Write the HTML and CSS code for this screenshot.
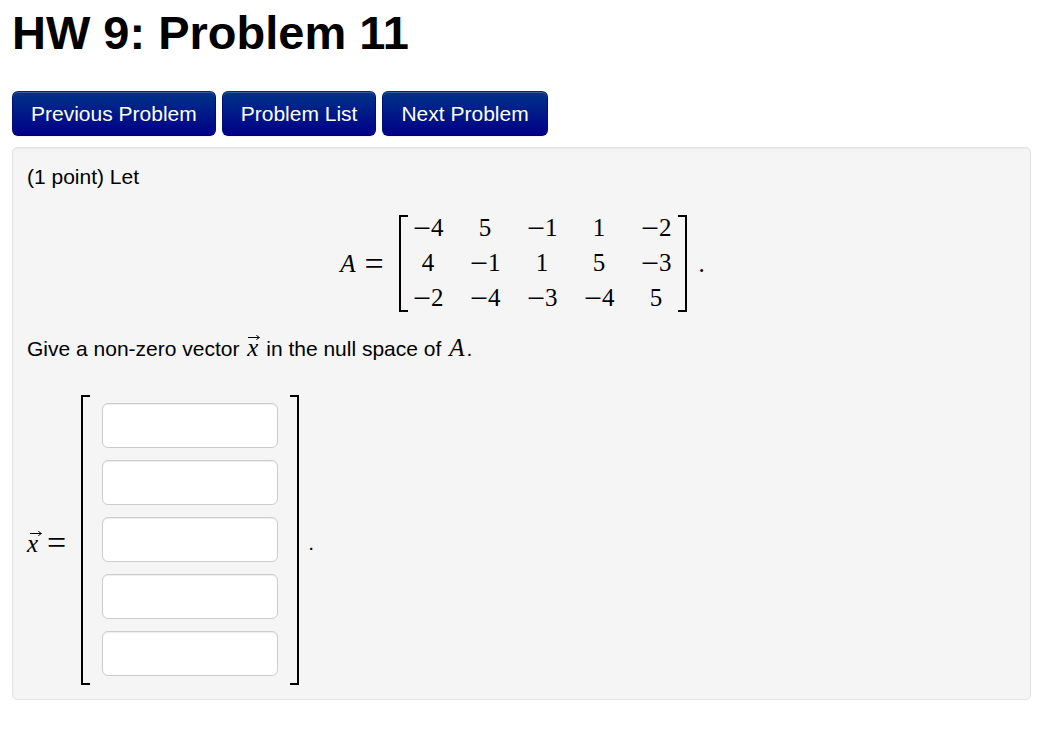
FILE: index.html
```html
<!DOCTYPE html>
<html lang="en">
<head>
<meta charset="utf-8">
<title>HW 9: Problem 11</title>
<link rel="stylesheet" href="styles.css">
</head>
<body>
<main class="page">
  <h1 class="title">HW 9: Problem 11</h1>
  <nav class="nav">
    <a class="btn" href="#previous">Previous Problem</a>
    <a class="btn" href="#list">Problem List</a>
    <a class="btn" href="#next">Next Problem</a>
  </nav>
  <form class="problem">
    <p class="text">(1 point) Let</p>
    <div class="equation centered">
      <span class="math symbol"><i>A</i></span>
      <span class="math equals">=</span>
      <div class="matrix">
        <span class="bracket left"></span>
        <table class="entries">
          <tr><td><span class="minus">−</span>4</td><td>5</td><td><span class="minus">−</span>1</td><td>1</td><td><span class="minus">−</span>2</td></tr>
          <tr><td>4</td><td><span class="minus">−</span>1</td><td>1</td><td>5</td><td><span class="minus">−</span>3</td></tr>
          <tr><td><span class="minus">−</span>2</td><td><span class="minus">−</span>4</td><td><span class="minus">−</span>3</td><td><span class="minus">−</span>4</td><td>5</td></tr>
        </table>
        <span class="bracket right"></span>
      </div>
      <span class="math stop">.</span>
    </div>
    <p class="text">Give a non-zero vector <span class="math vector"><i>x</i><svg class="arrow" viewBox="0 0 12 6" aria-hidden="true"><path d="M0 3.500H11M8.500 1Q9.500 3 11.500 3.500Q9.500 4 8.500 6"/></svg></span> in the null space of <span class="math symbol"><i>A</i></span>.</p>
    <div class="equation answer">
      <span class="math vector"><i>x</i><svg class="arrow" viewBox="0 0 12 6" aria-hidden="true"><path d="M0 3.500H11M8.500 1Q9.500 3 11.500 3.500Q9.500 4 8.500 6"/></svg></span>
      <span class="math equals">=</span>
      <div class="matrix">
        <span class="bracket left"></span>
        <div class="fields">
          <input class="field" type="text" aria-label="Entry 1 of x">
          <input class="field" type="text" aria-label="Entry 2 of x">
          <input class="field" type="text" aria-label="Entry 3 of x">
          <input class="field" type="text" aria-label="Entry 4 of x">
          <input class="field" type="text" aria-label="Entry 5 of x">
        </div>
        <span class="bracket right"></span>
      </div>
      <span class="stop">.</span>
    </div>
  </form>
</main>
</body>
</html>
```
FILE: styles.css
```css
* { box-sizing: border-box; }

body {
  margin: 0;
  background: #fff;
  color: #000;
  font: 21px/30px "Liberation Sans", Arial, sans-serif;
}

.page { padding: 4px 28px 28px 12px; }

.title {
  margin: 0 0 29px;
  font-size: 47px;
  line-height: 58px;
}

.nav {
  display: flex;
  flex-wrap: wrap;
  gap: 6px;
  margin-bottom: 11px;
}

.btn {
  padding: 7px 18px 6px;
  border: 1px solid #002b73;
  border-color: #002a70 #00106f #000070;
  border-radius: 6px;
  background: linear-gradient(#003388, #000088);
  box-shadow: inset 0 1px 0 rgba(255, 255, 255, .2), 0 1px 2px rgba(0, 0, 0, .05);
  color: #fff;
  text-decoration: none;
}

.problem {
  padding: 14px;
  border: 1px solid #e3e3e3;
  border-radius: 5px;
  background: #f5f5f5;
  box-shadow: inset 0 1px 1px rgba(0, 0, 0, .05);
}

.text { margin: 0; }

.math {
  font-family: "Liberation Serif", "Times New Roman", serif;
  font-size: 25px;
  line-height: 1;
}

.symbol { padding: 0 2px; }

.equation {
  display: flex;
  align-items: center;
}

.centered {
  justify-content: center;
  margin: 23px 0 22px;
}

.answer { margin-top: 31px; }

.equals {
  margin: 0 15px 0 7px;
  font-size: 34px;
}

.matrix { display: flex; }

.bracket {
  width: 9px;
  border: 2px solid #000;
}

.left { border-right: 0; }
.right { border-left: 0; }
.stop { margin-left: 9px; }

.centered .stop { margin-left: 12px; }

.entries {
  margin: -5px -7px -3px -8px;
  border-spacing: 0;
  font: 25px/35px "Liberation Serif", "Times New Roman", serif;
}

.entries td {
  min-width: 57px;
  width: 57px;
  padding: 0;
  text-align: center;
}

.minus {
  font-size: 32px;
  line-height: 0;
  vertical-align: -3px;
}

.vector {
  position: relative;
  display: inline-block;
  padding: 0 2px;
}

.arrow {
  position: absolute;
  top: -1px;
  left: 3px;
  width: 12px;
  height: 6px;
  fill: none;
  stroke: #000;
}

.answer .vector,
.answer .equals,
.answer .stop { margin-top: 6px; }

.answer .vector { padding-left: 0; }

.fields {
  display: grid;
  gap: 12px;
  padding: 8px 12px 9px;
}

.field {
  width: 176px;
  height: 45px;
  padding: 6px 9px;
  border: 1px solid #ccc;
  border-radius: 6px;
  background: #fff;
  box-shadow: inset 0 1px 1px rgba(0, 0, 0, .075);
  font: inherit;
}
```
